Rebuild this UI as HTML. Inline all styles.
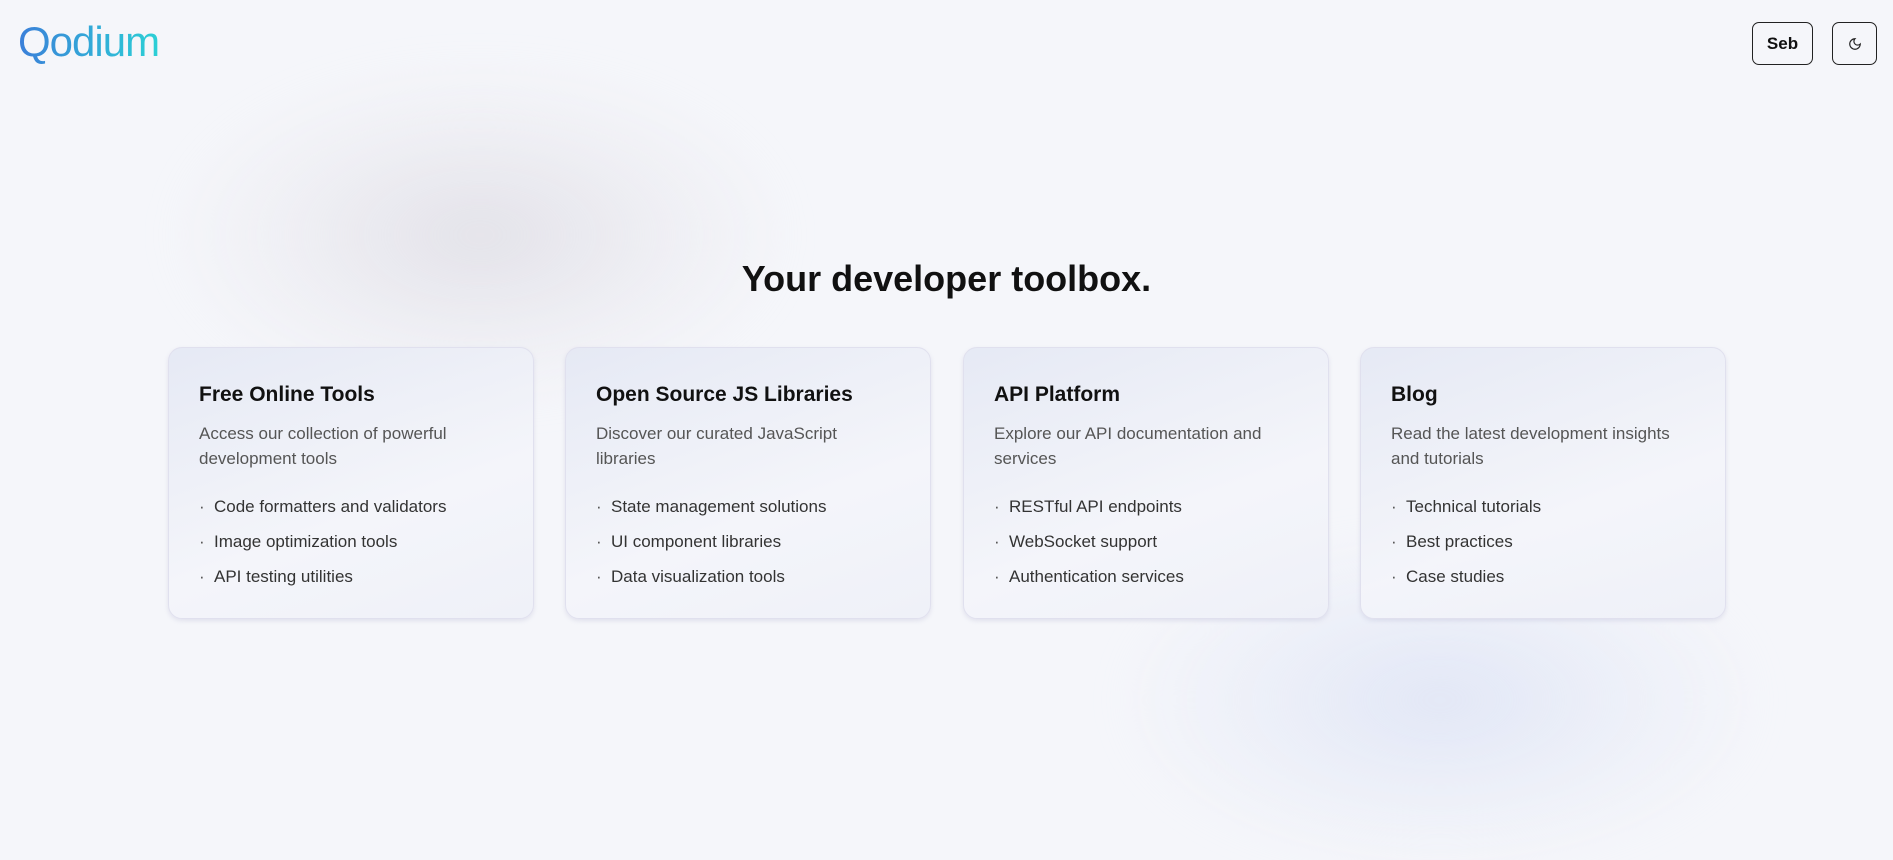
<!DOCTYPE html>
<html><head><meta charset="utf-8"><style>
html,body{margin:0;padding:0}
body{width:1893px;height:812px;overflow:hidden;background:#f5f6fa;font-family:"Liberation Sans",sans-serif;position:relative;color:#111}
.blob1{position:absolute;left:180px;top:70px;width:600px;height:330px;border-radius:50%;background:radial-gradient(ellipse at center,rgba(220,218,226,.7),rgba(232,231,237,.35) 50%,rgba(245,246,250,0) 75%);filter:blur(20px)}
.blob2{position:absolute;left:1130px;top:540px;width:620px;height:320px;border-radius:50%;background:radial-gradient(ellipse at center,rgba(222,228,245,.85),rgba(232,236,248,.45) 50%,rgba(245,246,250,0) 75%);filter:blur(20px)}
.logo{position:absolute;left:18px;top:18px;font-size:42px;font-weight:300;letter-spacing:-1px;background:linear-gradient(90deg,#3b7fd9,#2bd0d6);-webkit-background-clip:text;background-clip:text;color:transparent}
.btn{position:absolute;top:22px;height:43px;border:1.5px solid #222;border-radius:7px;box-sizing:border-box;display:flex;align-items:center;justify-content:center;font-weight:bold;font-size:17px}
h1{position:absolute;left:0;width:1893px;text-align:center;top:258px;margin:0;font-size:36px;font-weight:600;color:#111}
.card{position:absolute;top:347px;width:366px;height:272px;box-sizing:border-box;border:1.5px solid #e0e0ee;border-radius:14px;background:linear-gradient(160deg,rgba(228,232,244,.9),rgba(244,245,250,.9) 60%,rgba(238,240,248,.9));box-shadow:0 2px 4px rgba(180,180,210,.3);padding:35px 30px}
.card h2{margin:0;font-size:21px;font-weight:600;color:#111}
.card p{margin:14px 0 0;font-size:17px;line-height:25px;color:#555}
.card ul{list-style:none;margin:18px 0 0;padding:0}
.card li{font-size:17px;color:#333;height:35px;line-height:35px}
.card li:before{content:"·";display:inline-block;width:15px;color:#555}
</style></head><body>
<div class="blob1"></div><div class="blob2"></div>
<div class="logo">Qodium</div>
<div class="btn" style="left:1752px;width:61px">Seb</div>
<div class="btn" style="left:1832px;width:45px"><svg width="14" height="14" viewBox="0 0 24 24" fill="none" stroke="#222" stroke-width="2"><path d="M12 3a6 6 0 0 0 9 9 9 9 0 1 1-9-9z"/></svg></div>
<h1>Your developer toolbox.</h1>
<div class="card" style="left:168px"><h2>Free Online Tools</h2><p>Access our collection of powerful development tools</p><ul><li>Code formatters and validators</li><li>Image optimization tools</li><li>API testing utilities</li></ul></div>
<div class="card" style="left:565px"><h2>Open Source JS Libraries</h2><p>Discover our curated JavaScript libraries</p><ul><li>State management solutions</li><li>UI component libraries</li><li>Data visualization tools</li></ul></div>
<div class="card" style="left:963px"><h2>API Platform</h2><p>Explore our API documentation and services</p><ul><li>RESTful API endpoints</li><li>WebSocket support</li><li>Authentication services</li></ul></div>
<div class="card" style="left:1360px"><h2>Blog</h2><p>Read the latest development insights and tutorials</p><ul><li>Technical tutorials</li><li>Best practices</li><li>Case studies</li></ul></div>
</body></html>
